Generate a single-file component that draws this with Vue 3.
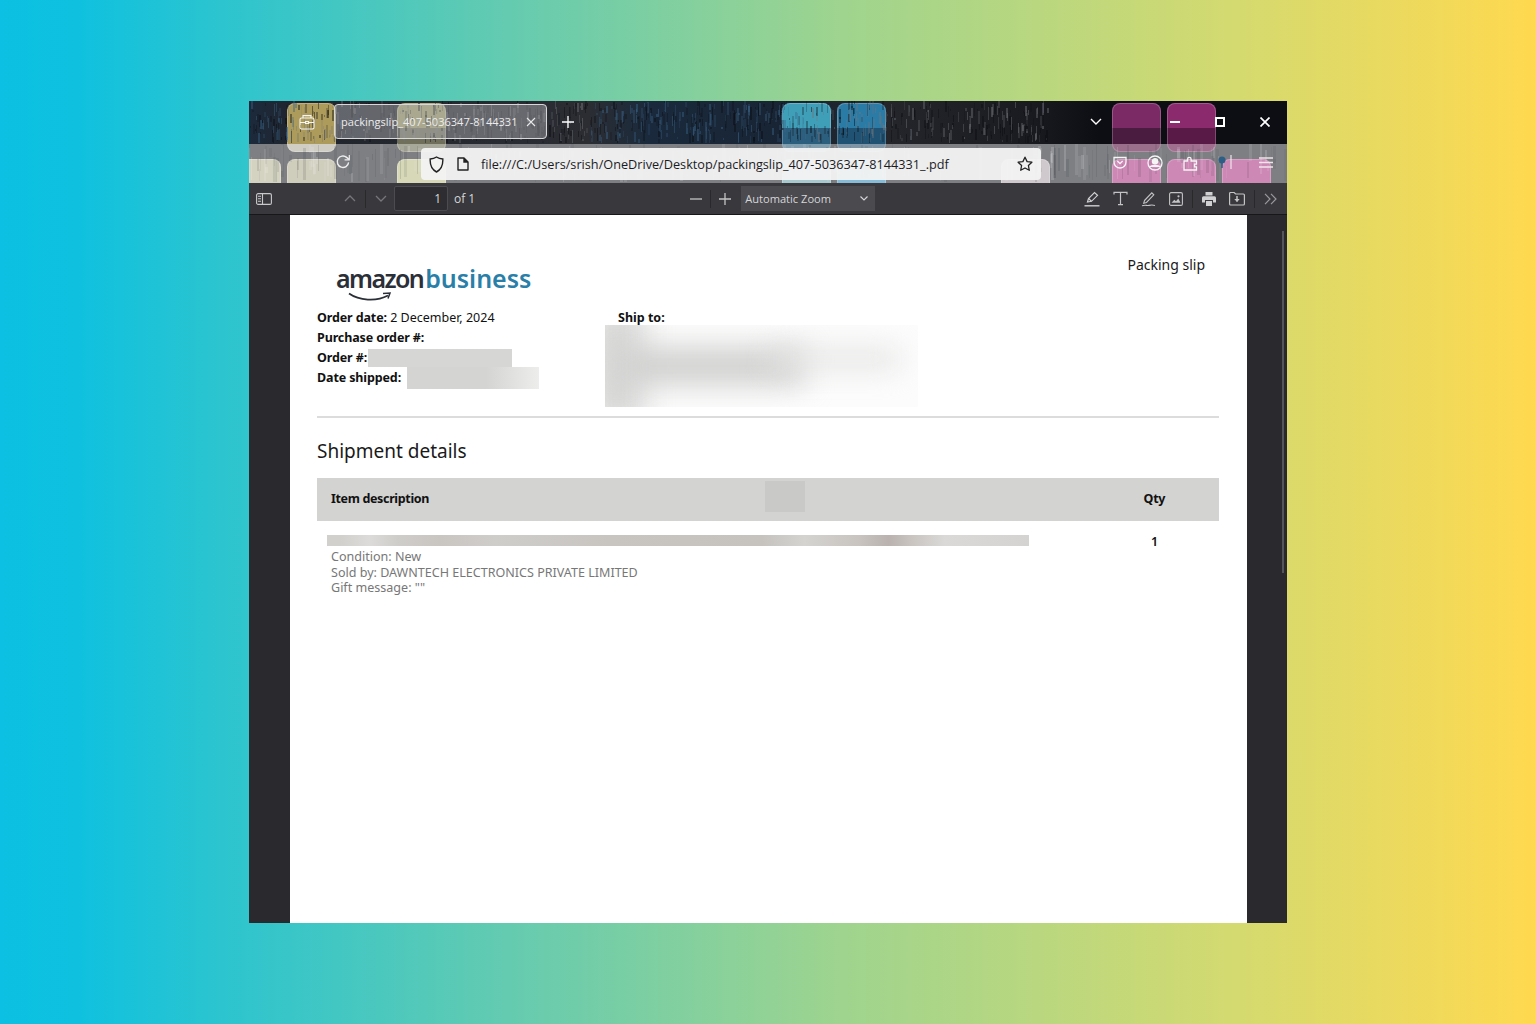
<template>
  <div class="stage">
    <div class="browser">
      <div class="chrome">
        <div class="art" aria-hidden="true">
          <div v-for="(t, i) in tiles" :key="i" class="tile" :style="tileStyle(t)"></div>
          <svg class="grain" width="1038" height="82">
            <rect v-for="(s, i) in streaks" :key="i" :x="s.x" :y="s.y" :width="s.w" :height="s.h" :fill="s.c" :opacity="s.o" />
          </svg>
        </div>

        <div class="titlebar">
          <button class="tab-list">
            <svg width="18" height="18" viewBox="0 0 18 18" fill="none" stroke="#f4f4f4" stroke-width="1.1">
              <rect x="2" y="5" width="14" height="11" rx="1.5" />
              <path d="M5 5V2.6h8V5M2 9.5h5.500M10.500 9.500H16" />
              <path d="M7.500 8.500h3v2h-3z" />
            </svg>
          </button>
          <div class="tab">
            <span class="tab-title">packingslip_407-5036347-8144331</span>
            <svg class="tab-x" width="10" height="10" viewBox="0 0 10 10" stroke="#e8e8e8" stroke-width="1.1"><path d="M1 1l8 8M9 1l-8 8" /></svg>
          </div>
          <svg class="new-tab" width="12" height="12" viewBox="0 0 12 12" stroke="#fff" stroke-width="1.3"><path d="M6 0v12M0 6h12" /></svg>
          <svg class="all-tabs" width="12" height="8" viewBox="0 0 12 8" fill="none" stroke="#fff" stroke-width="1.4"><path d="M1 1l5 5 5-5" /></svg>
          <div class="win-btns">
            <span class="win-min"></span>
            <span class="win-max"></span>
            <svg width="10" height="10" viewBox="0 0 10 10" stroke="#fff" stroke-width="1.7"><path d="M.5.5l9 9M9.5.5l-9 9" /></svg>
          </div>
        </div>

        <div class="navbar">
          <svg class="reload" width="16" height="16" viewBox="0 0 16 16" fill="none" stroke="#eee" stroke-width="1.4">
            <path d="M13.6 8.4A5.7 5.7 0 1 1 11.6 3.4L14 5.4" />
            <path d="M14.3 1v4.8H9.6" stroke-width="1.2" />
          </svg>
          <div class="urlbar">
            <svg class="shield" width="15" height="17" viewBox="0 0 15 17" fill="none" stroke="#222" stroke-width="1.4">
              <path d="M7.5 1c2 1.300 4 1.800 6.300 2 .3 5.500-1.300 10.500-6.300 13C2.500 13.500.9 8.500 1.200 3 3.500 2.800 5.500 2.300 7.500 1z" />
            </svg>
            <svg class="doc" width="12" height="14" viewBox="0 0 12 14" fill="none" stroke="#222" stroke-width="1.4">
              <path d="M1 1h6l4 4v8H1z" stroke-linejoin="round" />
              <path d="M7 1v4h4" fill="#222" />
            </svg>
            <span class="url">file:///C:/Users/srish/OneDrive/Desktop/packingslip_407-5036347-8144331_.pdf</span>
            <svg class="star" width="16" height="16" viewBox="0 0 16 16" fill="none" stroke="#222" stroke-width="1.300">
              <path d="M8 1.200l2.100 4.400 4.800.6-3.500 3.300.9 4.800L8 12l-4.300 2.300.9-4.800L1.100 6.200l4.800-.6z" stroke-linejoin="round" />
            </svg>
          </div>
          <div class="nav-icons">
            <svg width="14" height="13" viewBox="0 0 14 13" fill="none" stroke="#f5f5f5" stroke-width="1.3">
              <path d="M1 1.500h12v4.500a6 6 0 0 1-12 0z" />
              <path d="M4.300 5l2.700 2.500L9.700 5" />
            </svg>
            <svg width="16" height="16" viewBox="0 0 16 16" fill="none" stroke="#f5f5f5" stroke-width="1.300">
              <circle cx="8" cy="8" r="7" />
              <circle cx="8" cy="6.300" r="2.600" fill="#f5f5f5" />
              <path d="M3 12c1.500-2.200 8.500-2.200 10 0" fill="#f5f5f5" />
            </svg>
            <svg width="15" height="16" viewBox="0 0 15 16" fill="none" stroke="#f5f5f5" stroke-width="1.300">
              <path d="M1 15V6h3.500V4.200a1.800 1.800 0 1 1 3.600 0V6h5.400v3.200h-2v2.600h2V15z" />
            </svg>
            <svg width="17" height="18" viewBox="0 0 17 18" fill="none">
              <circle cx="4" cy="6" r="3.500" fill="#2d5f86" />
              <path d="M4 9v5" stroke="#2d5f86" stroke-width="1.500" />
              <path d="M13 1v14" stroke="#f0e8ec" stroke-width="1.200" />
            </svg>
            <svg class="menu-icon" width="14" height="11" viewBox="0 0 14 11" stroke="#f0e4ea" stroke-width="1.400"><path d="M0 1h14M0 5.500h14M0 10h14" /></svg>
          </div>
        </div>
      </div>

      <div class="pdf-toolbar">
        <svg class="sidebar-btn" width="16" height="12" viewBox="0 0 16 12" fill="none" stroke="#c9c9cb" stroke-width="1.100">
          <rect x=".6" y=".6" width="14.800" height="10.800" rx="1.500" />
          <path d="M6.500 .6v10.800M2 3.300h3M2 5.800h3M2 8.300h3" />
        </svg>
        <svg class="arrow-up" width="12" height="7" viewBox="0 0 12 7" fill="none" stroke="#77777a" stroke-width="1.300"><path d="M1 6l5-5 5 5" /></svg>
        <span class="sep"></span>
        <svg width="12" height="7" viewBox="0 0 12 7" fill="none" stroke="#77777a" stroke-width="1.300"><path d="M1 1l5 5 5-5" /></svg>
        <div class="page-input">1</div>
        <span class="page-count">of 1</span>
        <svg class="zoom-out" width="12" height="2" viewBox="0 0 12 2" stroke="#c4c4c6" stroke-width="1.300"><path d="M0 1h12" /></svg>
        <span class="sep sep-zoom"></span>
        <svg width="12" height="12" viewBox="0 0 12 12" stroke="#c4c4c6" stroke-width="1.300"><path d="M6 0v12M0 6h12" /></svg>
        <div class="zoom-select">
          <span>Automatic Zoom</span>
          <svg width="8" height="5" viewBox="0 0 8 5" fill="none" stroke="#d5d5d7" stroke-width="1.200"><path d="M.5.5L4 4 7.500.5" /></svg>
        </div>
        <div class="tools">
          <svg width="16" height="16" viewBox="0 0 16 16" fill="none" stroke="#d0d0d2" stroke-width="1.200">
            <path d="M3.500 11l1-3.500L10.500 1.500l3 2.800-6 6z" />
            <path d="M4.500 7.500l3 2.800" />
            <path d="M.5 14.800h15" stroke-width="1.400" />
          </svg>
          <svg width="15" height="15" viewBox="0 0 15 15" fill="none" stroke="#c4c4c6" stroke-width="1.200">
            <path d="M1 3.500V1.300h13v2.200M7.500 1.300v12.400M5 13.700h5" />
          </svg>
          <svg width="15" height="16" viewBox="0 0 15 16" fill="none" stroke="#c4c4c6" stroke-width="1.100">
            <path d="M3.500 9.500L10.800 1.800l2 2L5.500 11.500l-2.800.8z" />
            <path d="M1 14.800c3-1 3.500-.6 5-.3s4-1.200 8 0" />
          </svg>
          <svg width="14" height="14" viewBox="0 0 14 14" fill="none" stroke="#c4c4c6" stroke-width="1.100">
            <rect x=".6" y=".6" width="12.800" height="12.800" rx="1.500" />
            <path d="M2.500 10.800l2.800-3 1.700 1.500 2.300-2.800 2.200 4.300z" fill="#c4c4c6" stroke="none" />
            <circle cx="9.500" cy="4.300" r="1.100" fill="#c4c4c6" stroke="none" />
          </svg>
          <span class="sep sep-tools"></span>
          <svg class="print" width="14" height="14" viewBox="0 0 14 14">
            <path d="M3.500 0h7v3.500h-7zM1.500 4.300h11A1.500 1.500 0 0 1 14 5.800v4.700h-3V8H3v2.500H0V5.800a1.500 1.500 0 0 1 1.500-1.500zM4 9h6v5H4z" fill="#d0d0d2" />
          </svg>
          <svg class="save" width="16" height="14" viewBox="0 0 16 14" fill="none" stroke="#c4c4c6" stroke-width="1.200">
            <path d="M.6 1.500a1 1 0 0 1 1-1h3.500l1.500 1.500h7.800a1 1 0 0 1 1 1v9a1 1 0 0 1-1 1H1.600a1 1 0 0 1-1-1z" />
            <path d="M8 4v5.500" stroke-width="1.500" />
            <path d="M5.300 7L8 10l2.700-3z" fill="#c4c4c6" stroke="none" />
          </svg>
          <span class="sep sep-tools"></span>
          <svg width="13" height="12" viewBox="0 0 13 12" fill="none" stroke="#9a9a9d" stroke-width="1.200"><path d="M1 .8L6 6l-5 5.200M7 .8L12 6l-5 5.200" /></svg>
        </div>
      </div>

      <div class="viewer">
        <div class="page">
          <div class="page-head">
            <div class="logo">
              <span class="logo-amazon">amazon</span>
              <span class="logo-business">business</span>
              <svg class="smile" width="46" height="10" viewBox="0 0 46 10" fill="none">
                <path d="M1 1.500c10 7 27 8.500 39 2" stroke="#2b2f38" stroke-width="1.800" />
                <path d="M35 1.500l7-.5-2 5.500" stroke="#2b2f38" stroke-width="1.500" />
              </svg>
            </div>
            <div class="doc-title">Packing slip</div>
          </div>

          <div class="meta">
            <div class="order-info">
              <div><b>Order date:</b> 2 December, 2024</div>
              <div><b>Purchase order #:</b></div>
              <div class="with-block"><b>Order #:</b><i class="redact redact-order"></i></div>
              <div class="with-block"><b>Date shipped:</b><i class="redact redact-date"></i></div>
            </div>
            <div class="ship-to">
              <div class="ship-label"><b>Ship to:</b></div>
              <div class="ship-blur">
                <i class="smear smear-a"></i>
                <i class="smear smear-b"></i>
                <i class="smear smear-c"></i>
              </div>
            </div>
          </div>

          <div class="rule"></div>
          <h2 class="section-title">Shipment details</h2>

          <div class="table-head">
            <span>Item description</span>
            <i class="head-patch"></i>
            <span class="qty-head">Qty</span>
          </div>
          <div class="table-row">
            <div class="item-cell">
              <div class="item-redact"></div>
              <div class="item-line">Condition: New</div>
              <div class="item-line">Sold by: DAWNTECH ELECTRONICS PRIVATE LIMITED</div>
              <div class="item-line">Gift message: ""</div>
            </div>
            <div class="qty-cell">1</div>
          </div>
        </div>
        <div class="scroll-thumb"></div>
      </div>
    </div>
  </div>
</template>

<script setup>
// decorative wallpaper behind the translucent browser chrome
const tiles = [
  { x: 38, y: 2, a: '#ad9b5c', b: '#ad9b5c', c: '#cfcdc4' },
  { x: 148, y: 2, a: '#9b9a6a', b: '#6f6f5c', c: '#a8a89a' },
  { x: 533, y: 2, a: '#3f9fb9', b: '#2c5f7e', c: '#7f9cac' },
  { x: 588, y: 2, a: '#2a7ba6', b: '#1f5273', c: '#7f94a4' },
  { x: 863, y: 2, a: '#7c2a66', b: '#4a1c40', c: '#9a6f8c' },
  { x: 918, y: 2, a: '#8c2a6e', b: '#5a1a48', c: '#a06f90' },
  { x: -17, y: 58, a: '#d4d3c2', b: '#d4d3c2', c: '#d4d3c2' },
  { x: 38, y: 58, a: '#cfcdbc', b: '#cfcdbc', c: '#cfcdbc' },
  { x: 148, y: 58, a: '#d6d8b8', b: '#d6d8b8', c: '#d6d8b8' },
  { x: 533, y: 58, a: '#a8c8d0', b: '#a8c8d0', c: '#a8c8d0' },
  { x: 588, y: 58, a: '#86bcd8', b: '#86bcd8', c: '#86bcd8' },
  { x: 752, y: 58, a: '#cfc8cc', b: '#cfc8cc', c: '#cfc8cc' },
  { x: 863, y: 58, a: '#cd88b6', b: '#cd88b6', c: '#cd88b6' },
  { x: 918, y: 58, a: '#cd88b6', b: '#cd88b6', c: '#cd88b6' },
  { x: 973, y: 58, a: '#cd88b6', b: '#cd88b6', c: '#cd88b6' }
]

function tileStyle(t) {
  return {
    left: t.x + 'px',
    top: t.y + 'px',
    background: `linear-gradient(${t.a} 0 25px, ${t.b} 25px 41px, ${t.c} 41px)`
  }
}

function makeStreaks() {
  let seed = 40751
  const rnd = () => {
    seed = (seed * 16807) % 2147483647
    return seed / 2147483647
  }
  const out = []
  // title bar: busy on the left, fading out towards the window buttons
  for (let i = 0; i < 900; i++) {
    const x = Math.floor(rnd() * 800)
    const blue = x < 50 || (x > 340 && x < 560)
    const h = 2 + Math.floor(rnd() * 12)
    out.push({
      x,
      y: Math.floor(rnd() * (43 - h)),
      w: 1 + Math.floor(rnd() * 2),
      h,
      c: rnd() < 0.5 ? (blue ? '#3a6488' : '#74767c') : '#0a0b10',
      o: 0.18 + rnd() * 0.3
    })
  }
  // nav bar: light vertical grain
  for (let i = 0; i < 260; i++) {
    const h = 6 + Math.floor(rnd() * 28)
    out.push({
      x: Math.floor(rnd() * 1038),
      y: 43 + Math.floor(rnd() * (39 - h)),
      w: 1 + Math.floor(rnd() * 3),
      h,
      c: rnd() < 0.5 ? '#ffffff' : '#3a3c40',
      o: 0.06 + rnd() * 0.1
    })
  }
  return out
}

const streaks = makeStreaks()
</script>

<style scoped>
.stage {
  width: 1536px;
  height: 1024px;
  display: flex;
  align-items: center;
  justify-content: center;
  background: linear-gradient(90deg, #0bc0e2 0%, #0fc1df 5%, #64cbb0 33%, #9fd48e 55%, #d3da70 80%, #ffd94f 100%);
  font-family: "Open Sans", "Noto Sans", sans-serif;
}

.browser {
  width: 1038px;
  height: 822px;
  display: flex;
  flex-direction: column;
  background: #2a2a2e;
}

/* ---- browser chrome ---- */
.chrome {
  position: relative;
  height: 82px;
  overflow: hidden;
  background:
    linear-gradient(#7d7f83, #7d7f83) 0 43px / 100% 39px no-repeat,
    linear-gradient(90deg, #1c2a3c 0, #20242c 50px, #2b2d33 340px, #1a2a3c 400px, #182434 540px, #25272d 620px, #1a1b21 780px, #0d0e14 850px);
}

.art {
  position: absolute;
  inset: 0;
}

.tile {
  position: absolute;
  width: 49px;
  height: 49px;
  border-radius: 8px;
  box-shadow: inset 0 0 0 1px rgba(255, 255, 255, 0.22);
}

.grain {
  position: absolute;
  left: 0;
  top: 0;
}

.titlebar {
  position: relative;
  height: 43px;
  box-sizing: border-box;
  padding: 0 0 2px 49px;
  display: flex;
  align-items: center;
}

.titlebar > * {
  flex-shrink: 0;
}

.tab-list {
  width: 18px;
  height: 18px;
  padding: 0;
  border: none;
  background: none;
  margin-right: 18px;
  display: flex;
}

.tab {
  width: 213px;
  height: 35px;
  box-sizing: border-box;
  padding: 0 10px 0 6px;
  display: flex;
  align-items: center;
  justify-content: space-between;
  border: 1px solid #d8d8d8;
  border-radius: 4px;
  background: rgba(190, 190, 195, 0.42);
  color: #ececec;
  font-size: 11.050px;
}

.tab-title {
  white-space: nowrap;
}

.tab-x {
  flex-shrink: 0;
}

.new-tab {
  margin-left: 15px;
}

.all-tabs {
  margin-left: 516px;
}

.win-btns {
  display: flex;
  align-items: center;
  margin-left: 68px;
}

.win-min {
  width: 10px;
  height: 2px;
  background: #fff;
  margin-right: 35px;
}

.win-max {
  width: 6px;
  height: 6px;
  border: 2px solid #fff;
  margin-right: 35px;
}

.navbar {
  position: relative;
  height: 39px;
  display: flex;
  align-items: center;
  padding-left: 86px;
}

.reload {
  margin-top: -3px;
  margin-right: 70px;
}

.urlbar {
  width: 620px;
  height: 32px;
  flex-shrink: 0;
  box-sizing: border-box;
  margin-top: 1px;
  padding: 0 8px;
  display: flex;
  align-items: center;
  border-radius: 4px;
  background: rgba(243, 243, 243, 0.95);
  color: #1c1c1e;
  font-size: 12.700px;
}

.doc {
  margin-left: 13px;
}

.url {
  margin-left: 12px;
  flex: 1;
  white-space: nowrap;
}

.nav-icons {
  display: flex;
  align-items: center;
  gap: 20px;
  margin-left: 72px;
  margin-top: -2px;
}

.menu-icon {
  margin-left: 4px;
}

/* ---- pdf.js toolbar ---- */
.pdf-toolbar {
  height: 32px;
  box-sizing: border-box;
  display: flex;
  align-items: center;
  padding-left: 7px;
  background: #38383d;
  border-bottom: 1px solid #17171a;
  color: #d6d6d8;
  font-size: 12px;
}

.pdf-toolbar > * {
  flex-shrink: 0;
}

.arrow-up {
  margin-left: 72px;
}

.sep {
  width: 1px;
  height: 18px;
  margin: 0 9px;
  background: #29292c;
}

.page-input {
  width: 54px;
  height: 25px;
  box-sizing: border-box;
  margin-left: 7px;
  padding-right: 6px;
  text-align: right;
  line-height: 24px;
  border: 1px solid #4c4c50;
  border-radius: 2px;
  background: #2e2e32;
}

.page-count {
  margin-left: 6px;
  white-space: nowrap;
}

.zoom-out {
  margin-left: 215px;
}

.sep-zoom {
  margin: 0 8px;
}

.zoom-select {
  width: 134px;
  height: 25px;
  box-sizing: border-box;
  margin-left: 10px;
  padding: 0 7px 0 4px;
  display: flex;
  align-items: center;
  justify-content: space-between;
  background: #4a4a4f;
  font-size: 11.100px;
}

.tools {
  margin-left: 209px;
  display: flex;
  align-items: center;
  gap: 13px;
}

.tools > * {
  flex-shrink: 0;
}

.sep-tools {
  margin: 0 -4px;
}

/* ---- document ---- */
.viewer {
  position: relative;
  flex: 1;
  min-height: 0;
  padding: 0 40px 0 41px;
  overflow: hidden;
}

.page {
  height: 100%;
  box-sizing: border-box;
  padding: 0 28px 0 27px;
  background: #fff;
  color: #111;
  font-family: "Noto Sans", "Open Sans", sans-serif;
  font-size: 12.500px;
}

.scroll-thumb {
  position: absolute;
  right: 3px;
  top: 16px;
  width: 2px;
  height: 342px;
  background: #55565c;
}

.page-head {
  display: flex;
  justify-content: space-between;
  padding-top: 47px;
  height: 93px;
  box-sizing: border-box;
}

.logo {
  position: relative;
  margin-left: 19px;
  display: flex;
  align-items: baseline;
  height: 36px;
}

.logo-amazon {
  font-size: 25px;
  font-weight: 600;
  letter-spacing: -1.600px;
  color: #2b2f38;
  line-height: 32px;
}

.logo-business {
  margin-left: 2px;
  font-size: 25px;
  font-weight: 600;
  letter-spacing: 0;
  color: #2a7fa8;
  line-height: 32px;
}

.smile {
  position: absolute;
  left: 12px;
  top: 30px;
}

.doc-title {
  margin-top: -7px;
  margin-right: 14px;
  font-size: 14px;
  line-height: 20px;
  color: #1a1a1a;
}

.meta {
  display: grid;
  grid-template-columns: 288px 1fr;
  height: 98px;
}

.order-info > div {
  height: 20px;
  line-height: 20px;
  white-space: nowrap;
}

.order-info b,
.ship-label b,
.table-head,
.qty-cell {
  font-weight: 700;
}

.order-info b {
  letter-spacing: -0.120px;
}

.table-head span {
  letter-spacing: -0.350px;
}

.with-block {
  display: flex;
  align-items: center;
}

.redact {
  display: block;
  height: 18px;
}

.redact-order {
  width: 144px;
  margin-left: 1px;
  background: #d6d6d4;
}

.redact-date {
  width: 132px;
  height: 22px;
  margin-left: 6px;
  background: linear-gradient(90deg, #d4d4d2 60%, #ededec);
}

.ship-to {
  min-width: 0;
}

.ship-label {
  height: 17px;
  line-height: 20px;
  padding-left: 13px;
}

.ship-blur {
  position: relative;
  width: 313px;
  height: 82px;
  overflow: hidden;
  background: #fcfcfc;
}

.smear {
  position: absolute;
  display: block;
  filter: blur(14px);
  background: #d0d0cf;
}

.smear-a {
  left: -16px;
  top: -16px;
  width: 56px;
  height: 114px;
  background: #d8d8d7;
}

.smear-b {
  left: 14px;
  top: 22px;
  width: 185px;
  height: 38px;
}

.smear-c {
  left: 165px;
  top: 24px;
  width: 130px;
  height: 20px;
  background: #e4e4e3;
}

.rule {
  height: 2px;
  margin-top: 10px;
  background: #dcdcdc;
}

.section-title {
  margin: 20px 0 14px;
  font-size: 19px;
  line-height: 26px;
  font-weight: 400;
  color: #1a1a1a;
}

.table-head {
  position: relative;
  height: 43px;
  box-sizing: border-box;
  display: flex;
  align-items: center;
  justify-content: space-between;
  padding: 0 54px 2px 14px;
  background: #d3d3d1;
  font-size: 12.500px;
}

.head-patch {
  position: absolute;
  left: 448px;
  top: 3px;
  width: 40px;
  height: 31px;
  background: #c9c9c7;
}

.table-row {
  display: flex;
  justify-content: space-between;
  padding-top: 14px;
}

.item-redact {
  width: 702px;
  height: 11px;
  margin-left: -4px;
  margin-bottom: 3px;
  background: linear-gradient(90deg, #d2d0cd 0 2%, #dcdbd9 6%, #cfcdca 10%, #c9c5c1 16%, #cfcdca 24%, #c8c5c1 40%, #c6c3bf 62%, #d4d3d0 68%, #c8c3bf 76%, #b9b2ae 80%, #c8c3bf 83%, #dad9d7 88%, #d4d3d1 100%);
}

.item-cell {
  padding-left: 14px;
  color: #777;
}

.item-line {
  height: 15.500px;
  line-height: 15.500px;
  font-size: 12.550px;
  white-space: nowrap;
}

.qty-cell {
  width: 68px;
  margin-top: -1px;
  font-size: 12.500px;
  line-height: 16px;
  font-weight: 600;
}
</style>

<style>
body {
  margin: 0;
}
</style>
